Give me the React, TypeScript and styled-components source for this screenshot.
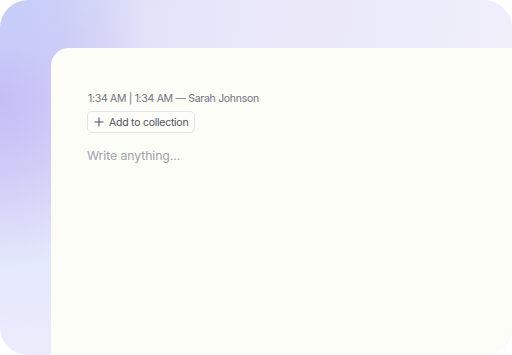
import React from "react";
import styled, { createGlobalStyle } from "styled-components";

const Global = createGlobalStyle`
  html, body { margin: 0; padding: 0; background: #ffffff; }
  body { font-family: Inter, "Noto Sans", sans-serif; -webkit-font-smoothing: antialiased; }
`;

// ── Styled ────────────────────────────────────────────────────────────────────

const Frame = styled.div`
  width: 512px;
  height: 355px;
  box-sizing: border-box;
  border-radius: 28px;
  overflow: hidden;
  padding: 48px 0 0 51px;
  display: flex;
  background:
    radial-gradient(ellipse 150px 110px at 0% 0%, rgba(196, 206, 248, 0.95) 0%, rgba(196, 206, 248, 0) 100%),
    radial-gradient(ellipse 160px 170px at 0% 27%, rgba(190, 180, 245, 0.8) 0%, rgba(190, 180, 245, 0) 100%),
    linear-gradient(180deg, rgba(230, 236, 252, 0) 45%, rgba(228, 234, 252, 0.9) 75%, rgba(236, 235, 251, 1) 100%),
    linear-gradient(100deg, #dddbf8 0%, #e8e6f9 40%, #f1f0fa 100%);
`;

const Card = styled.div`
  flex: 1;
  background: #fdfdf8;
  border-top-left-radius: 18px;
  padding: 44px 36px 0 36px;
  display: flex;
  flex-direction: column;
  align-items: flex-start;
`;

const Meta = styled.div`
  font-size: 10.5px;
  line-height: 14px;
  letter-spacing: -0.3px;
  color: #72727e;
  padding-left: 1px;
`;

const CollectionBtn = styled.button`
  margin-top: 5px;
  display: inline-flex;
  align-items: center;
  gap: 5px;
  height: 22px;
  padding: 0 6px 0 6px;
  border: 1px solid #e4e4e6;
  border-radius: 5px;
  background: #fdfdf9;
  font-family: inherit;
  font-size: 10.5px;
  letter-spacing: -0.25px;
  color: #50505b;
  cursor: pointer;
`;

const Placeholder = styled.div`
  margin-top: 15px;
  font-size: 12.3px;
  line-height: 16px;
  letter-spacing: -0.1px;
  color: #a2a2ad;
`;

// ── Component ─────────────────────────────────────────────────────────────────

export default function App() {
  return (
    <>
      <Global />
      <Frame>
        <Card>
          <Meta>1:34 AM | 1:34 AM — Sarah Johnson</Meta>
          <CollectionBtn type="button">
            <svg width="10" height="10" viewBox="0 0 10 10" fill="none">
              <path d="M5 0.5v9M0.5 5h9" stroke="#55555f" strokeWidth="1.1" />
            </svg>
            Add to collection
          </CollectionBtn>
          <Placeholder>Write anything...</Placeholder>
        </Card>
      </Frame>
    </>
  );
}
